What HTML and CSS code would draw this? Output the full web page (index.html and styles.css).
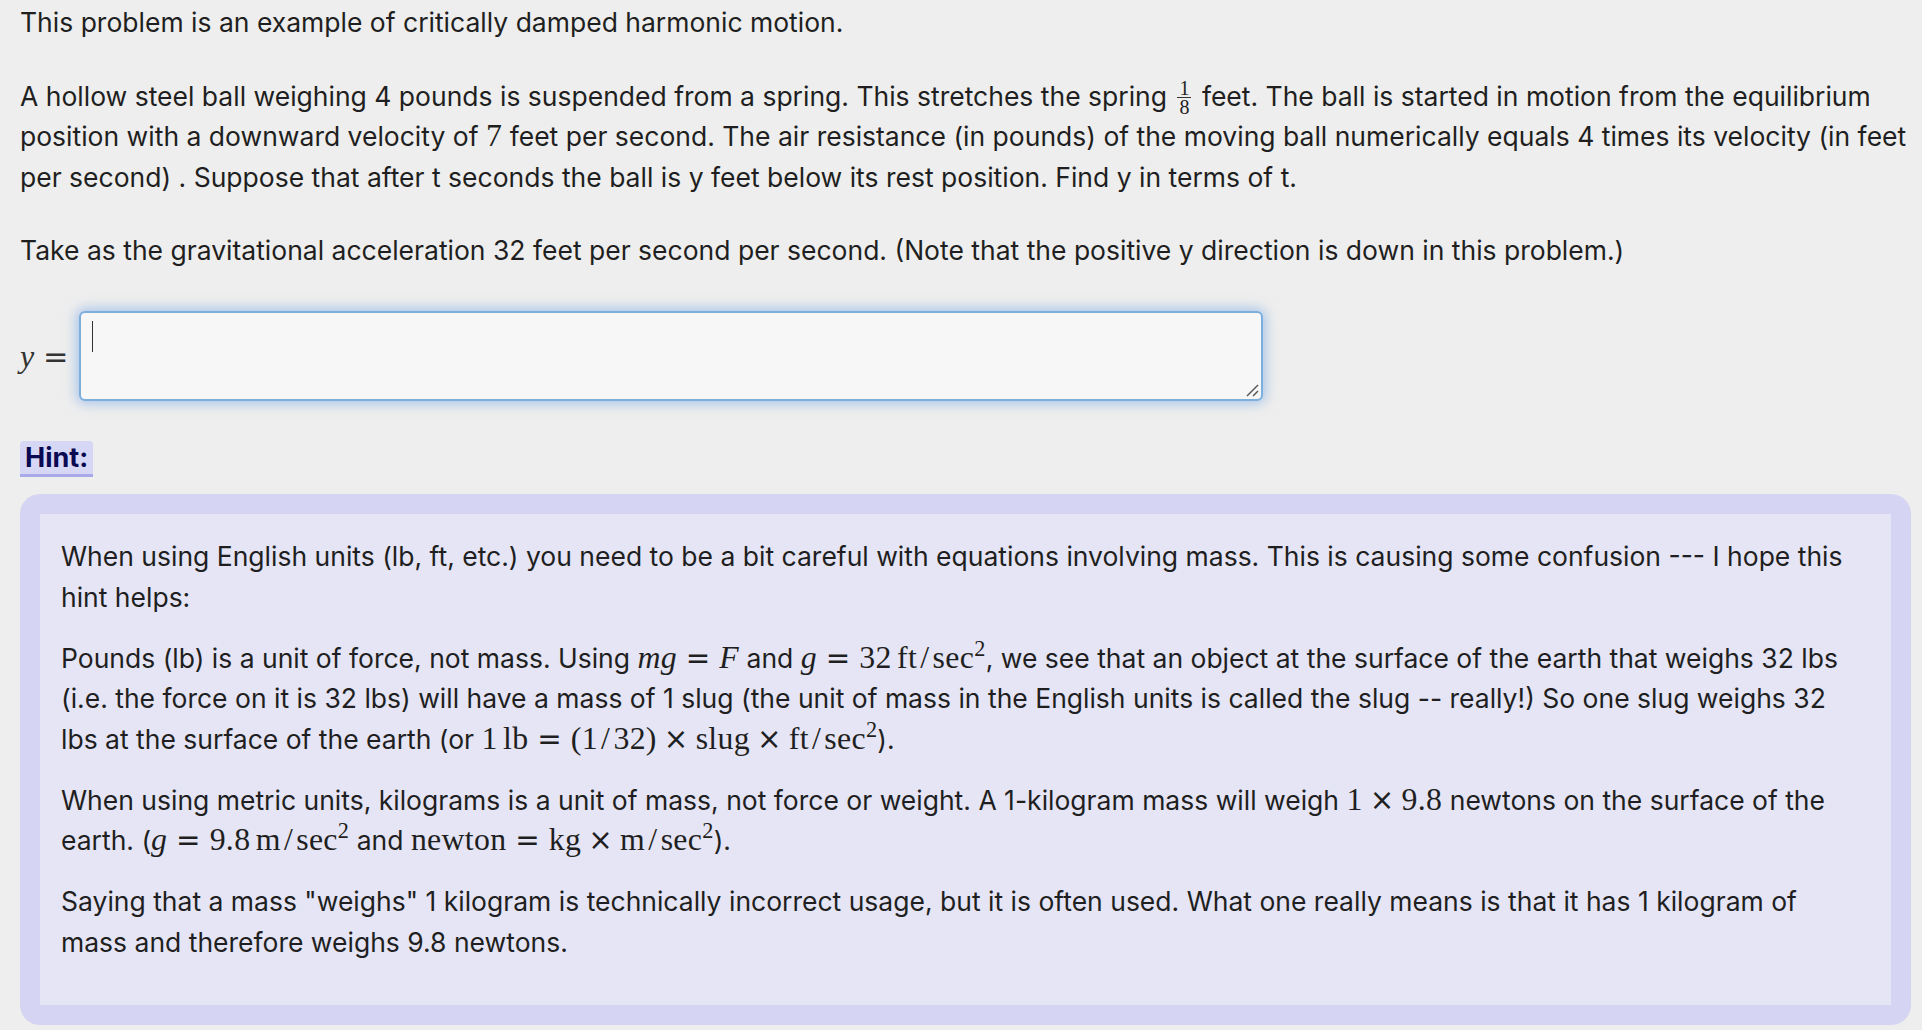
FILE: index.html
```html
<!DOCTYPE html>
<html>
<head>
<meta charset="utf-8">
<link rel="stylesheet" href="styles.css">
</head>
<body>
<div class="page">
  <p>This problem is an example of critically damped harmonic motion.</p>
  <p class="lines">A hollow steel ball weighing 4 pounds is suspended from a spring. This stretches the spring <span class="frac"><span class="num">1</span><span class="den">8</span></span> feet. The ball is started in motion from the equilibrium<br>position with a downward velocity of <span class="m">7</span> feet per second. The air resistance (in pounds) of the moving ball numerically equals 4 times its velocity (in feet<br>per second) . Suppose that after t seconds the ball is y feet below its rest position. Find y in terms of t.</p>
  <p>Take as the gravitational acceleration 32 feet per second per second. (Note that the positive y direction is down in this problem.)</p>

  <div class="answer">
    <span class="m answer-label"><i>y</i><span class="op eq-tight">=</span></span>
    <div class="field">
      <span class="caret"></span>
      <svg class="grip" width="14" height="14" viewBox="0 0 14 14"><line x1="2" y1="13" x2="13" y2="2" /><line x1="8" y1="13" x2="13" y2="8" /></svg>
    </div>
  </div>

  <div class="hint-label">Hint:</div>

  <div class="hint">
    <div class="hint-inner">
      <p class="lines">When using English units (lb, ft, etc.) you need to be a bit careful with equations involving mass. This is causing some confusion --- I hope this<br>hint helps:</p>
      <p class="lines">Pounds (lb) is a unit of force, not mass. Using <span class="m"><i>m</i><i>g</i><span class="op rel">=</span><i>F</i></span> and <span class="m"><i>g</i><span class="op rel">=</span>32<span class="thin"></span>ft<span class="sl">/</span>sec<sup class="sup">2</sup></span>, we see that an object at the surface of the earth that weighs 32 lbs<br>(i.e. the force on it is 32 lbs) will have a mass of 1 slug (the unit of mass in the English units is called the slug -- really!) So one slug weighs 32<br>lbs at the surface of the earth (or <span class="m">1<span class="thin"></span>lb<span class="op rel">=</span>(1<span class="sl">/</span>32)<span class="op bin">×</span>slug<span class="op bin">×</span>ft<span class="sl">/</span>sec<sup class="sup">2</sup></span>).</p>
      <p class="lines">When using metric units, kilograms is a unit of mass, not force or weight. A 1-kilogram mass will weigh <span class="m">1<span class="op bin">×</span>9.8</span> newtons on the surface of the<br>earth. (<span class="m"><i>g</i><span class="op rel">=</span>9.8<span class="thin"></span>m<span class="sl">/</span>sec<sup class="sup">2</sup></span> and <span class="m">newton<span class="op rel">=</span>kg<span class="op bin">×</span>m<span class="sl">/</span>sec<sup class="sup">2</sup></span>).</p>
      <p class="lines">Saying that a mass "weighs" 1 kilogram is technically incorrect usage, but it is often used. What one really means is that it has 1 kilogram of<br>mass and therefore weighs 9.8 newtons.</p>
    </div>
  </div>
</div>
</body>
</html>
```

FILE: styles.css
```css
html, body {
  margin: 0;
  padding: 0;
  background: #eeeeee;
}

body {
  font-family: Inter, "Noto Sans", "Liberation Sans", sans-serif;
  font-size: 26.5px;
  line-height: 40.5px;
  color: #1f1f21;
}

.page {
  padding: 2px 11px 0 20px;
}

p {
  margin: 0 0 33px 0;
}

.lines {
  white-space: nowrap;
}

.m {
  font-family: "Liberation Serif", "DejaVu Serif", serif;
  font-size: 1.2em;
  line-height: 1;
  white-space: nowrap;
  letter-spacing: 0.01em;
}

.m i {
  font-style: italic;
}

.op {
  font-family: "DejaVu Sans", sans-serif;
  font-size: 0.92em;
}

.rel {
  margin: 0 0.3em;
}

.bin {
  margin: 0 0.24em;
}

.sl {
  margin: 0 0.1em;
}

.eq-tight {
  margin-left: 0.28em;
  font-size: 0.95em;
}

.thin {
  display: inline-block;
  width: 0.1667em;
}

.sup {
  font-size: 0.7em;
  line-height: 0;
  vertical-align: 0.55em;
}

.frac {
  display: inline-flex;
  flex-direction: column;
  align-items: center;
  vertical-align: 11px;
  font-family: "Liberation Serif", "DejaVu Serif", serif;
  font-size: 20px;
  line-height: 16px;
  margin: 0 3px;
}

.frac .num {
  padding: 0 2px 1px;
  border-bottom: 1.3px solid #333;
}

.frac .den {
  padding-top: 1px;
}

.answer {
  display: flex;
  align-items: center;
  margin: 40.5px 0 40px 0;
}

.answer-label {
  width: 58.5px;
  font-size: 32px;
  color: #333;
}

.field {
  position: relative;
  box-sizing: border-box;
  width: 1184px;
  height: 90px;
  border: 2px solid #7eaedc;
  border-radius: 6px;
  background: #f7f7f7;
  box-shadow: 0 0 12px 3px rgba(105, 160, 228, 0.5);
  padding: 8px 11px;
}

.caret {
  display: block;
  width: 1.5px;
  height: 31px;
  background: #333;
}

.grip {
  position: absolute;
  right: 2px;
  bottom: 2px;
}

.grip line {
  stroke: #555;
  stroke-width: 1.4;
}

.hint-label {
  display: inline-block;
  font-weight: 700;
  font-size: 27px;
  line-height: 33px;
  padding: 0 5px;
  color: #0a0a52;
  background: #d6d6f5;
  border-bottom: 3px solid #a9a9e9;
  border-radius: 4px 4px 0 0;
  vertical-align: top;
}

.hint {
  margin-top: 12.5px;
  background: #d5d5f3;
  padding: 20px;
  border-radius: 20px;
}

.hint-inner {
  background: #e5e5f6;
  padding: 22px 20px 22px 21px;
}

.hint-inner p {
  margin: 0 0 20.5px 0;
}
```
